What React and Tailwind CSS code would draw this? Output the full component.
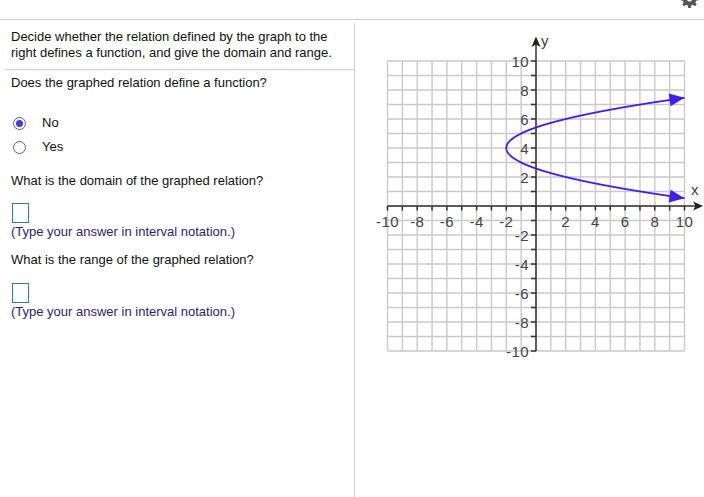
import React from "react";

const X = (u) => 536 + u * 14.85;
const Y = (v) => 206 - v * 14.5;
const BLUE = "#3f1cff";

function Gear() {
  const pts = [];
  const cx = 9.5, cy = -1;
  const n = 8;
  for (let i = 0; i < n; i++) {
    const a0 = (i / n) * Math.PI * 2;
    const step = (Math.PI * 2) / n;
    const angs = [
      [a0 - step * 0.18, 9],
      [a0 + step * 0.18, 9],
      [a0 + step * 0.32, 6.8],
      [a0 + step * 0.68, 6.8],
    ];
    angs.forEach(([a, r]) => pts.push(`${cx + r * Math.cos(a)},${cy + r * Math.sin(a)}`));
  }
  return (
    <svg width="19" height="9" viewBox="0 0 19 9">
      <polygon points={pts.join(" ")} fill="#555" />
      <circle cx={cx} cy={cy} r="2.6" fill="#fff" />
    </svg>
  );
}

function Arrow({ tip, d }) {
  const L = 15, W = 6.5;
  const bx = tip[0] - L * d[0], by = tip[1] - L * d[1];
  const px = -d[1], py = d[0];
  return (
    <polygon
      points={`${tip[0]},${tip[1]} ${bx + W * px},${by + W * py} ${bx - W * px},${by - W * py}`}
      fill={BLUE}
    />
  );
}

function Graph() {
  const units = [];
  for (let i = -10; i <= 10; i++) units.push(i);
  const labels = [-10, -8, -6, -4, -2, 2, 4, 6, 8, 10];
  const curve = [];
  const s = Math.sqrt(12);
  for (let k = 0; k <= 200; k++) {
    const w = -s + (2 * s * k) / 200;
    curve.push(`${X(w * w - 2).toFixed(2)},${Y(w + 4).toFixed(2)}`);
  }
  const dTop = [102.9 / 103.92, -14.5 / 103.92];
  const dBot = [102.9 / 103.92, 14.5 / 103.92];
  return (
    <svg width="349" height="345" viewBox="355 20 349 345" className="block">
      <g stroke="#c9c9c9" strokeWidth="1.4">
        {units.map((i) => (
          <line key={"v" + i} x1={X(i)} y1={Y(10)} x2={X(i)} y2={Y(-10)} />
        ))}
        {units.map((i) => (
          <line key={"h" + i} x1={X(-10)} y1={Y(i)} x2={X(10)} y2={Y(i)} />
        ))}
      </g>
      <g stroke="#333" strokeWidth="1.5">
        <line x1={X(-10)} y1={Y(0)} x2={696} y2={Y(0)} />
        <line x1={X(0)} y1={Y(-10)} x2={X(0)} y2={44} />
        {units.map((i) => (
          <line key={"tx" + i} x1={X(i)} y1={Y(0)} x2={X(i)} y2={Y(0) + 4.5} />
        ))}
        {units.map((i) => (
          <line key={"ty" + i} x1={X(0) - 5} y1={Y(i)} x2={X(0)} y2={Y(i)} />
        ))}
      </g>
      <polygon points={`703,${Y(0)} 693,${Y(0) - 4.5} 695.5,${Y(0)} 693,${Y(0) + 4.5}`} fill="#222" />
      <polygon points={`${X(0)},36.5 ${X(0) - 4.5},47 ${X(0)},44.5 ${X(0) + 4.5},47`} fill="#222" />
      <g fill="#444" fontFamily="'Liberation Sans', Arial, sans-serif" fontSize="15" letterSpacing="0.4">
        {labels.map((u) => (
          <text key={"lx" + u} x={X(u)} y={227} textAnchor="middle">
            {u}
          </text>
        ))}
        {labels.map((v) => (
          <text key={"ly" + v} x={529} y={Y(v) + 5.5} textAnchor="end">
            {v}
          </text>
        ))}
        <text x={541} y={46} fontSize="15">y</text>
        <text x={691} y={195} fontSize="15">x</text>
      </g>
      <polyline points={curve.join(" ")} fill="none" stroke={BLUE} strokeWidth="1.8" />
      <Arrow tip={[X(10), Y(4 + s)]} d={dTop} />
      <Arrow tip={[X(10), Y(4 - s)]} d={dBot} />
    </svg>
  );
}

function Radio({ checked, label }) {
  return (
    <div className="flex items-center h-[24px]">
      <div className="ml-[13px] w-[13px] h-[13px] rounded-full border-[1.5px] border-[#5454e0] flex items-center justify-center">
        {checked && <div className="w-[7px] h-[7px] rounded-full bg-[#3f3fd6]" />}
      </div>
      <span className="ml-[16px]">{label}</span>
    </div>
  );
}

function AnswerBox() {
  return <div className="ml-[12px] w-[17px] h-[20px] border-[1.5px] border-[#2a80a6]" />;
}

export default function App() {
  return (
    <div
      className="w-[704px] h-[497px] bg-white text-[13px] leading-[16px] text-[#111] overflow-hidden"
      style={{ fontFamily: "'Liberation Sans', Arial, sans-serif" }}
    >
      <div className="h-[20px] border-b border-[#ccd0dc] flex justify-end items-start pr-[5px]">
        <Gear />
      </div>
      <div className="flex items-start">
        <div className="w-[355px] h-[474px] mt-[3px] border-r border-[#c9cde0] flex flex-col">
          <div className="ml-[5px] pl-[6px] pt-[6px] pb-[9px] border-b border-[#d0d3dc] leading-[15.5px]">
            Decide whether the relation defined by the graph to the
            <br />
            right defines a function, and give the domain and range.
          </div>
          <div className="pl-[11px] mt-[5px]">Does the graphed relation define a function?</div>
          <div className="mt-[20px]">
            <Radio checked label="No" />
            <Radio label="Yes" />
          </div>
          <div className="pl-[11px] mt-[14px]">What is the domain of the graphed relation?</div>
          <div className="mt-[14px]">
            <AnswerBox />
          </div>
          <div className="pl-[11px] mt-[1px] text-[#2c1c78]">(Type your answer in interval notation.)</div>
          <div className="pl-[11px] mt-[12px]">What is the range of the graphed relation?</div>
          <div className="mt-[15px]">
            <AnswerBox />
          </div>
          <div className="pl-[11px] mt-[1px] text-[#2c1c78]">(Type your answer in interval notation.)</div>
        </div>
        <Graph />
      </div>
    </div>
  );
}
